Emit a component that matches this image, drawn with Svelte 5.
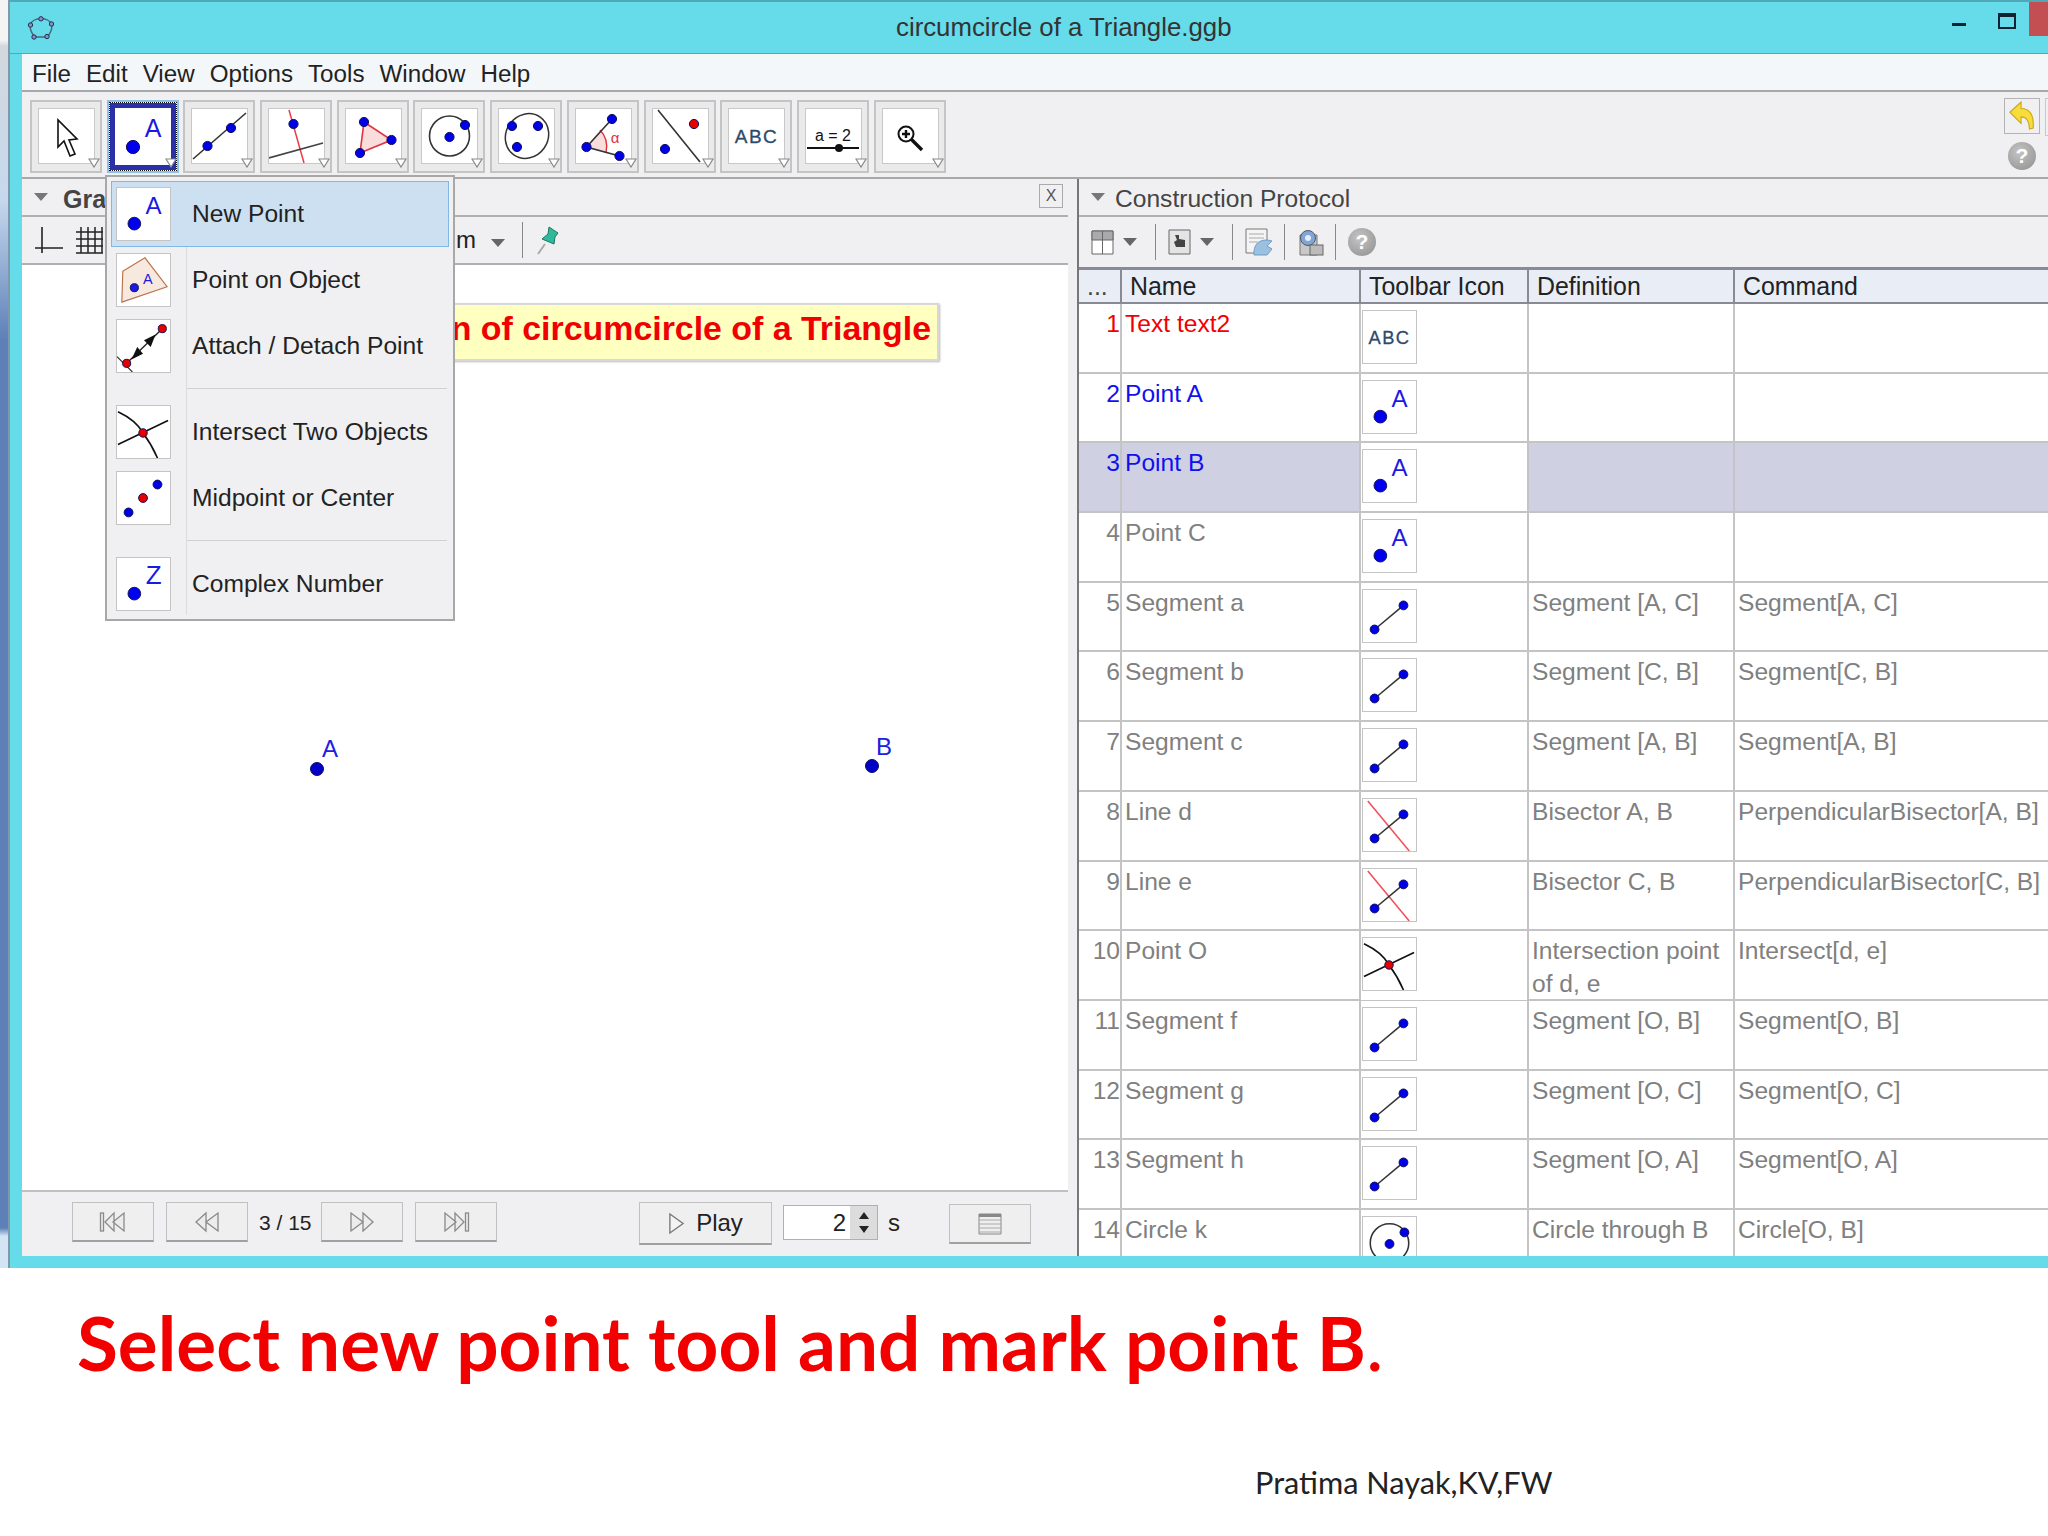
<script>
  const menus = ['File', 'Edit', 'View', 'Options', 'Tools', 'Window', 'Help'];
  const tools = ['move', 'point', 'line', 'perp', 'poly', 'circle', 'conic', 'angle', 'reflect', 'abc', 'slider', 'zoom'];

  const popup = [
    { group: [['point', 'New Point', true], ['onobject', 'Point on Object'], ['attach', 'Attach / Detach Point']] },
    { group: [['intersect', 'Intersect Two Objects'], ['midpoint', 'Midpoint or Center']] },
    { group: [['complex', 'Complex Number']] }
  ];

  const rows = [
    ['Text text2', 'abc', '', '', 'red'],
    ['Point A', 'point', '', '', 'blue'],
    ['Point B', 'point', '', '', 'blue sel'],
    ['Point C', 'point', '', ''],
    ['Segment a', 'seg', 'Segment [A, C]', 'Segment[A, C]'],
    ['Segment b', 'seg', 'Segment [C, B]', 'Segment[C, B]'],
    ['Segment c', 'seg', 'Segment [A, B]', 'Segment[A, B]'],
    ['Line d', 'bisect', 'Bisector A, B', 'PerpendicularBisector[A, B]'],
    ['Line e', 'bisect', 'Bisector C, B', 'PerpendicularBisector[C, B]'],
    ['Point O', 'intersect', 'Intersection point of d, e', 'Intersect[d, e]'],
    ['Segment f', 'seg', 'Segment [O, B]', 'Segment[O, B]'],
    ['Segment g', 'seg', 'Segment [O, C]', 'Segment[O, C]'],
    ['Segment h', 'seg', 'Segment [O, A]', 'Segment[O, A]'],
    ['Circle k', 'circle', 'Circle through B', 'Circle[O, B]']
  ];
</script>

{#snippet dot(x, y, fill = '#0000e6', r = 4.6)}
  <circle cx={x} cy={y} {r} {fill} stroke="#10105a" stroke-width="1" />
{/snippet}

{#snippet icon(name)}
  <svg class="ico" viewBox="0 0 55 54">
    {#if name === 'move'}
      <path d="M19 11 L19 38 L25 32 L31 47 L36 45 L30 31 L38 30 Z" fill="#fff" stroke="#111" stroke-width="1.6" />
    {:else if name === 'point'}
      {@render dot(18, 37, '#0000f0', 6.6)}
      <text x="38" y="27" class="sv" font-size="25" fill="#1a1ae0" text-anchor="middle">A</text>
    {:else if name === 'complex'}
      {@render dot(18, 37, '#0000f0', 6.6)}
      <text x="38" y="27" class="sv" font-size="27" fill="#1a1ae0" text-anchor="middle">Z</text>
    {:else if name === 'line'}
      <line x1="1" y1="50" x2="54" y2="4" stroke="#333" stroke-width="1.6" />
      {@render dot(15.5, 37)}
      {@render dot(39, 19)}
    {:else if name === 'seg'}
      <line x1="12" y1="41" x2="42" y2="16" stroke="#333" stroke-width="1.6" />
      {@render dot(12, 41)}
      {@render dot(42, 16)}
    {:else if name === 'bisect'}
      <line x1="5" y1="2" x2="48" y2="54" stroke="#f0505a" stroke-width="1.6" />
      <line x1="12" y1="41" x2="42" y2="16" stroke="#333" stroke-width="1.6" />
      {@render dot(12, 41)}
      {@render dot(42, 16)}
    {:else if name === 'perp'}
      <line x1="20" y1="1" x2="35" y2="54" stroke="#ee3a46" stroke-width="1.5" />
      <line x1="0" y1="49" x2="54" y2="34" stroke="#444" stroke-width="1.8" />
      {@render dot(24.5, 15)}
    {:else if name === 'poly'}
      <path d="M18 13 L45.5 31 L14 44 Z" fill="#f9dcdc" stroke="#e0323e" stroke-width="1.6" />
      {@render dot(18, 13)}
      {@render dot(45.5, 31)}
      {@render dot(14, 44)}
    {:else if name === 'circle'}
      <circle cx="27.5" cy="27" r="20" fill="none" stroke="#333" stroke-width="1.6" />
      {@render dot(27.5, 28)}
      {@render dot(43, 16)}
    {:else if name === 'conic'}
      <ellipse cx="28" cy="27" rx="21" ry="23" transform="rotate(35 28 27)" fill="none" stroke="#333" stroke-width="1.5" />
      {@render dot(13, 17)}
      {@render dot(39, 17)}
      {@render dot(18, 38)}
    {:else if name === 'angle'}
      <path d="M10.5 38 L24 21 Q33 30 30 44 Z" fill="#f9dcdc" />
      <path d="M24 21 Q33 30 30 44" fill="none" stroke="#e0323e" stroke-width="1.4" />
      <path d="M36 10 L10.5 38 L43.5 47" fill="none" stroke="#333" stroke-width="1.6" />
      <text x="39" y="34" class="sv" font-size="15" fill="#e0323e" text-anchor="middle">α</text>
      {@render dot(36, 10)}
      {@render dot(10.5, 38)}
      {@render dot(43.5, 47)}
    {:else if name === 'reflect'}
      <line x1="5" y1="1" x2="47" y2="53" stroke="#333" stroke-width="1.6" />
      {@render dot(41, 15, '#e60000')}
      {@render dot(12, 40)}
    {:else if name === 'abc'}
      <text x="27.5" y="34" class="sv" font-size="19" fill="#2c4a6b" stroke="#2c4a6b" stroke-width="0.3" letter-spacing="1.5" text-anchor="middle">ABC</text>
    {:else if name === 'slider'}
      <text x="27" y="32" class="sv" font-size="16" fill="#111" text-anchor="middle">a = 2</text>
      <line x1="1" y1="39" x2="53" y2="39" stroke="#111" stroke-width="2" />
      <circle cx="33" cy="39" r="4" fill="#111" />
    {:else if name === 'zoom'}
      <line x1="28" y1="30" x2="39" y2="41" stroke="#111" stroke-width="3.4" />
      <circle cx="23" cy="25" r="7.5" fill="#fff" stroke="#111" stroke-width="2" />
      <path d="M19 25 H27 M23 21 V29" stroke="#111" stroke-width="2.4" />
    {:else if name === 'onobject'}
      <path d="M6 18 L29 4 L52 34 L5 50 Z" fill="#f8e9df" stroke="#b8734c" stroke-width="1.2" />
      {@render dot(18, 35, '#1a1ae0', 4.2)}
      <text x="32" y="31" class="sv" font-size="15" fill="#1a1ae0" text-anchor="middle">A</text>
    {:else if name === 'attach'}
      <path d="M0 38 L16 54" stroke="#333" stroke-width="1.2" />
      <line x1="10" y1="45" x2="47" y2="9" stroke="#222" stroke-width="1.4" />
      <path d="M15 41 L21 28 L27 35 Z M40 15 L28 21 L35 28 Z" fill="#111" />
      {@render dot(47, 9, '#e60000', 4.2)}
      {@render dot(10, 45, '#e60000', 4.2)}
    {:else if name === 'intersect'}
      <path d="M1 6 Q20 15 27 28 Q36 40 42 54" fill="none" stroke="#111" stroke-width="1.7" />
      <line x1="1" y1="40" x2="53" y2="15" stroke="#111" stroke-width="1.7" />
      {@render dot(27, 28, '#e60000', 4.4)}
    {:else if name === 'midpoint'}
      {@render dot(42, 13)}
      {@render dot(27, 27, '#e60000')}
      {@render dot(12, 42)}
    {/if}
  </svg>
{/snippet}

{#snippet media(kind)}
  <svg class="media" viewBox="0 0 28 28">
    <g fill="#ececec" stroke="#8a8a8a" stroke-width="1.3">
      {#if kind === 'first'}
        <rect x="1.5" y="5" width="3" height="18" />
        <path d="M15 5 V23 L6 14 Z M25 5 V23 L14 14 Z" />
      {:else if kind === 'prev'}
        <path d="M13 5 V23 L3 14 Z M25 5 V23 L13 14 Z" />
      {:else if kind === 'next'}
        <path d="M3 5 V23 L15 14 Z M15 5 V23 L25 14 Z" />
      {:else}
        <path d="M3 5 V23 L14 14 Z M13 5 V23 L22 14 Z" />
        <rect x="23.5" y="5" width="3" height="18" />
      {/if}
    </g>
  </svg>
{/snippet}

{#snippet help(size)}
  <span class="help" style="width:{size}px;height:{size}px;font-size:{size - 7}px">?</span>
{/snippet}

<div class="app">
  <div class="window">
    <div class="strip"></div>
    <div class="frame">
      <header class="title">
        <svg class="logo" viewBox="0 0 28 24">
          <path d="M14 2.5 C19 2.5 24 5 25 9 C25 14 23 18 20 21 L8 21 C5 18 3 14 3 9 C4 5 9 2.5 14 2.5 Z" fill="none" stroke="#4a6a70" stroke-width="1.4" />
          <g fill="#7f8fe0" stroke="#223" stroke-width="0.9">
            <circle cx="14" cy="2.8" r="2.2" /><circle cx="24.5" cy="8" r="2.2" /><circle cx="20" cy="20.5" r="2.2" /><circle cx="7" cy="21" r="2.2" /><circle cx="3.5" cy="9" r="2.2" />
          </g>
        </svg>
        <span class="title-text">circumcircle of a Triangle.ggb</span>
        <span class="min"></span>
        <span class="max"></span>
        <span class="close"></span>
      </header>

      <div class="body">
        <nav class="menubar">
          {#each menus as m}<span>{m}</span>{/each}
        </nav>

        <div class="toolbar">
          {#each tools as t, i}
            <div class="tool" class:active={i === 1}>
              <div class="tool-face">{@render icon(t)}</div>
              <svg class="caret" viewBox="0 0 12 10"><path d="M1 1 H11 L6 9 Z" fill="#fff" stroke="#888" stroke-width="1.2" /></svg>
            </div>
          {/each}
          <div class="tool-right">
            <div class="undo">
              <svg viewBox="0 0 30 34" width="28" height="32"><path d="M2 13 L14 2 V9 C23 9 28 15 27 30 L23 31 C23 23 20 18 14 18 V25 Z" fill="#f7dc3c" stroke="#c9a817" stroke-width="1.2" /></svg>
            </div>
            {@render help(28)}
          </div>
          <span class="redo"></span>
        </div>

        <div class="panels">
          <section class="left">
            <div class="panel-head">
              <i class="tri"></i><b>Gra</b>
              <span class="x">X</span>
            </div>
            <div class="stylebar">
              <svg class="axes" viewBox="0 0 28 28"><path d="M7 1 V27 M0 22 H28" stroke="#222" stroke-width="1.6" /></svg>
              <svg class="grid-ico" viewBox="0 0 28 28"><path d="M6 1 V27 M13 1 V27 M20 1 V27 M27 1 V27 M1 6 H28 M1 13 H28 M1 20 H28 M1 27 H28" stroke="#222" stroke-width="1.5" /></svg>
              <span class="m">m</span>
              <i class="tri dark"></i>
              <span class="div"></span>
              <svg class="pin" viewBox="0 0 24 30"><path d="M3 28 L10 18" stroke="#aaa" stroke-width="2" /><path d="M14 1 L23 7 L20 11 L19 18 L7 13 L13 8 Z" fill="#2fb89a" stroke="#187a66" stroke-width="1" /></svg>
            </div>
            <div class="canvas">
              <div class="note">Construction of circumcircle of a Triangle</div>
              <div class="pt" style="left:288px;top:497px"><i></i></div>
              <span class="pt-label" style="left:321px;top:470px">A</span>
              <div class="pt" style="left:843px;top:494px"><i></i></div>
              <span class="pt-label" style="left:875px;top:468px">B</span>
            </div>
            <div class="playbar">
              <button class="pb first">{@render media('first')}</button>
              <button class="pb">{@render media('prev')}</button>
              <span class="count">3 / 15</span>
              <button class="pb">{@render media('next')}</button>
              <button class="pb">{@render media('last')}</button>
              <button class="play">
                <svg viewBox="0 0 18 24" width="17" height="23"><path d="M2 2 V22 L16 12 Z" fill="#f4f4f4" stroke="#777" stroke-width="1.4" /></svg>
                Play
              </button>
              <div class="spin">
                <span class="val">2</span>
                <span class="arrows"><i class="up"></i><i class="down"></i></span>
              </div>
              <span class="sec">s</span>
              <button class="pb list">
                <svg viewBox="0 0 24 22" width="24" height="22"><path d="M1 1 H23 V21 H1 Z" fill="#eee" stroke="#888" /><path d="M1 7 H23 M1 11 H23 M1 15 H23 M1 19 H23" stroke="#aaa" /><path d="M1 1 H23 V4 H1 Z" fill="#888" /></svg>
              </button>
            </div>
          </section>

          <section class="right">
            <div class="panel-head">
              <i class="tri"></i><span class="cp">Construction Protocol</span>
            </div>
            <div class="stylebar rbar">
              <svg width="23" height="25" viewBox="0 0 23 25"><path d="M1 1 H22 V24 H1 Z" fill="#fff" stroke="#666" /><path d="M1 1 H22 V10 H1 Z" fill="#aaa" stroke="#666" /><path d="M11.5 1 V24" stroke="#666" /></svg>
              <i class="tri dark s1"></i>
              <span class="div"></span>
              <svg class="s2" width="23" height="26" viewBox="0 0 23 26"><path d="M1 1 H22 V25 H1 Z" fill="#e4e4e4" stroke="#666" /><path d="M7 6 H11 V10 L17 11 V18 H8 L6 13 L9 11 Z" fill="#444" /></svg>
              <i class="tri dark s1"></i>
              <span class="div"></span>
              <svg class="s2" width="28" height="28" viewBox="0 0 28 28"><path d="M1 1 H22 V25 H1 Z" fill="#f4f4f4" stroke="#777" /><path d="M4 6 H19 M4 10 H19 M4 14 H13" stroke="#aaa" /><path d="M9 27 C8 14 17 10 27 13 L22 18 L27 21 L22 27 Z" fill="#9cc0e0" stroke="#6f9cc4" /></svg>
              <span class="div"></span>
              <svg class="s2" width="27" height="28" viewBox="0 0 27 28"><path d="M3 7 H20 V27 H3 Z" fill="#c8c8c8" stroke="#777" /><circle cx="11" cy="10" r="7.5" fill="#7fa6d6" stroke="#556" /><circle cx="11" cy="10" r="3" fill="#e4eefa" /><rect x="13" y="17" width="13" height="10" fill="#bbb" stroke="#666" /></svg>
              <span class="div"></span>
              <span class="s2">{@render help(28)}</span>
            </div>

            <div class="table">
              <div class="thead">
                <span class="dots">...</span><span>Name</span><span>Toolbar Icon</span><span>Definition</span><span>Command</span>
              </div>
              {#each rows as r, i}
                <div class="row {r[4] ?? ''}">
                  <span class="num">{i + 1}</span>
                  <span class="name">{r[0]}</span>
                  <span class="tb"><span class="box">{@render icon(r[1])}</span></span>
                  <span class="def">{r[2]}</span>
                  <span class="cmd">{r[3]}</span>
                </div>
              {/each}
            </div>
          </section>
        </div>

        <div class="popup">
          {#each popup as p, gi}
            {#if gi > 0}<div class="sep"></div>{/if}
            {#each p.group as it}
              <div class="item" class:hot={it[2]}>
                <span class="box">{@render icon(it[0])}</span>
                <span class="item-text">{it[1]}</span>
              </div>
            {/each}
          {/each}
        </div>
      </div>
    </div>
  </div>

  <div class="slide">
    <h1>Select new point tool and mark point B<span>.</span></h1>
    <p>Pratima Nayak,KV,FW</p>
  </div>
</div>

<style>
  :global(body) {
    margin: 0;
    background: #fff;
  }
  .app {
    width: 2048px;
    height: 1536px;
    overflow: hidden;
    display: flex;
    flex-direction: column;
    font-family: "Liberation Sans", Arial, sans-serif;
    color: #222;
  }
  .window {
    height: 1268px;
    display: flex;
    flex: none;
  }
  .strip {
    width: 8px;
    flex: none;
    border-right: 2px solid #7f9aa6;
    background: linear-gradient(#f4f4f4 0, #f4f4f4 40px, #d3d8de 46px, #c6d8ee 200px, #5d80b8 340px, #5d80b8 1228px, #d3e4f5 1236px);
  }
  .frame {
    flex: 1;
    min-width: 0;
    display: flex;
    flex-direction: column;
    background: #66dbe9;
    border-top: 2px solid #4fa9b6;
    box-sizing: border-box;
  }
  .title {
    height: 52px;
    flex: none;
    display: flex;
    align-items: center;
    position: relative;
    border-bottom: 1px solid #4fa9b6;
    box-sizing: border-box;
  }
  .logo {
    width: 28px;
    height: 24px;
    margin-left: 17px;
  }
  .title-text {
    position: absolute;
    left: 886px;
    top: 11px;
    font-size: 25.8px;
    color: #333;
  }
  .min {
    position: absolute;
    left: 1942px;
    top: 21px;
    width: 14px;
    height: 3px;
    background: #123;
  }
  .max {
    position: absolute;
    left: 1988px;
    top: 11px;
    width: 14px;
    height: 10px;
    border: 2px solid #123;
    border-top-width: 4px;
  }
  .close {
    position: absolute;
    left: 2019px;
    top: 0;
    width: 19px;
    height: 34px;
    background: #c44f53;
  }
  .body {
    flex: 1;
    margin: 0 0 12px 12px;
    display: flex;
    flex-direction: column;
    position: relative;
    background: #f0f0f2;
    min-height: 0;
  }
  .menubar {
    height: 38px;
    flex: none;
    box-sizing: border-box;
    background: #f4f7fa;
    border-bottom: 2px solid #a8a8a8;
    display: flex;
    align-items: center;
    padding: 4px 0 0 10px;
    gap: 15px;
    font-size: 24.2px;
  }
  .toolbar {
    height: 87px;
    flex: none;
    box-sizing: border-box;
    border-bottom: 2px solid #a8a8a8;
    display: flex;
    padding: 8px 0 0 8px;
    gap: 4.7px;
    position: relative;
  }
  .tool {
    width: 72px;
    height: 73px;
    box-sizing: border-box;
    border: 2px solid #c4c4c4;
    background: #eaeaea;
    padding: 7px 7px;
    position: relative;
  }
  .tool-face {
    width: 55px;
    height: 54px;
    background: #fff;
    box-shadow: 0 0 0 1px #c8c8c8;
    overflow: hidden;
  }
  .tool.active {
    border: 2px solid #8fc0e8;
    padding: 1px;
    background: #fff;
  }
  .tool.active .tool-face {
    width: 66px;
    height: 67px;
    box-sizing: border-box;
    border: 5px solid #2b2fa8;
    outline: 1px dotted #111;
    box-shadow: none;
    display: flex;
    align-items: center;
    justify-content: center;
  }
  .ico {
    display: block;
    width: 100%;
    height: 100%;
  }
  .tool.active .ico {
    width: 55px;
    height: 54px;
  }
  .sv {
    font-family: "Liberation Sans", Arial, sans-serif;
  }
  .caret {
    position: absolute;
    right: 0;
    bottom: 3px;
    width: 12px;
    height: 10px;
  }
  .tool-right {
    position: absolute;
    left: 1982px;
    top: 6px;
    width: 36px;
    display: flex;
    flex-direction: column;
    align-items: center;
    gap: 8px;
  }
  .redo {
    position: absolute;
    left: 2023px;
    top: 6px;
    width: 6px;
    height: 36px;
    border: 1px solid #c8c8c8;
    border-right: none;
  }
  .undo {
    width: 36px;
    height: 36px;
    box-sizing: border-box;
    border: 1px solid #b4b4b4;
    display: flex;
    align-items: center;
    justify-content: center;
  }
  .help {
    display: inline-flex;
    align-items: center;
    justify-content: center;
    border-radius: 50%;
    background: radial-gradient(circle at 40% 35%, #c4c4c4, #8e8e8e);
    color: #fff;
    font-weight: 700;
  }
  .panels {
    flex: 1;
    display: flex;
    min-height: 0;
  }
  .left {
    width: 1046px;
    flex: none;
    display: flex;
    flex-direction: column;
    margin-right: 9px;
  }
  .right {
    flex: 1;
    min-width: 0;
    display: flex;
    flex-direction: column;
    border-left: 2px solid #777;
  }
  .panel-head {
    height: 38px;
    flex: none;
    box-sizing: border-box;
    border-bottom: 2px solid #b0b0b0;
    display: flex;
    align-items: center;
    position: relative;
    padding: 4px 0 0 12px;
    font-size: 24.6px;
  }
  .panel-head b {
    margin-left: 15px;
    color: #444;
    font-size: 25px;
  }
  .cp {
    margin-left: 10px;
    color: #444;
  }
  .tri {
    display: inline-block;
    width: 0;
    height: 0;
    border-left: 7px solid transparent;
    border-right: 7px solid transparent;
    border-top: 8px solid #777;
  }
  .panel-head .tri {
    margin-top: -5px;
  }
  .x {
    position: absolute;
    left: 1017px;
    top: 5px;
    width: 22px;
    height: 22px;
    border: 1px solid #aaa;
    font-size: 16px;
    line-height: 22px;
    text-align: center;
    color: #555;
  }
  .stylebar {
    height: 48px;
    flex: none;
    box-sizing: border-box;
    border-bottom: 2px solid #b0b0b0;
    display: flex;
    align-items: center;
    position: relative;
    padding-left: 13px;
  }
  .axes {
    width: 28px;
    height: 28px;
  }
  .grid-ico {
    width: 28px;
    height: 28px;
    margin-left: 12px;
  }
  .m {
    position: absolute;
    left: 434px;
    top: 9px;
    font-size: 24px;
  }
  .tri.dark {
    border-top-color: #666;
    position: absolute;
    left: 469px;
    top: 22px;
  }
  .div {
    width: 1px;
    height: 36px;
    background: #888;
  }
  .stylebar > .div {
    position: absolute;
    left: 500px;
    top: 5px;
  }
  .pin {
    position: absolute;
    left: 513px;
    top: 9px;
    width: 24px;
    height: 30px;
  }
  .canvas {
    flex: 1;
    background: #fff;
    position: relative;
    overflow: hidden;
  }
  .note {
    position: absolute;
    right: 129px;
    top: 38px;
    height: 58px;
    line-height: 47px;
    padding: 0 6px;
    box-sizing: border-box;
    background: #ffffc0;
    border: 2px solid #d8d8d8;
    box-shadow: 1px 1px 2px #bbb;
    font-size: 33.9px;
    font-weight: 700;
    color: #f00000;
    white-space: nowrap;
  }
  .pt {
    position: absolute;
  }
  .pt i {
    display: block;
    width: 12px;
    height: 12px;
    border-radius: 50%;
    background: #0000c8;
    border: 1px solid #10105a;
  }
  .pt-label {
    position: absolute;
    font-size: 24px;
    color: #2020e0;
    margin-left: -21px;
  }
  .playbar {
    height: 66px;
    flex: none;
    box-sizing: border-box;
    border-top: 2px solid #c0c0c0;
    display: flex;
    align-items: flex-start;
    padding-top: 10px;
    font-size: 24px;
    background: #f0f0f2;
  }
  button {
    font-family: inherit;
    font-size: 24px;
    color: #222;
    padding: 0;
    margin: 0;
  }
  .pb {
    width: 82px;
    height: 40px;
    box-sizing: border-box;
    border: 1px solid #c0c0c0;
    border-bottom: 2px solid #a0a0a0;
    background: #efefef;
    margin-right: 12px;
    display: flex;
    align-items: center;
    justify-content: center;
  }
  .pb.first {
    margin-left: 50px;
  }
  .media {
    width: 28px;
    height: 28px;
  }
  .count {
    width: 62px;
    margin-left: -1px;
    line-height: 42px;
    font-size: 21px;
  }
  .play {
    width: 133px;
    height: 43px;
    box-sizing: border-box;
    border: 1px solid #c0c0c0;
    border-bottom: 2px solid #a0a0a0;
    background: #efefef;
    margin-left: 130px;
    display: flex;
    align-items: center;
    justify-content: center;
    gap: 11px;
  }
  .spin {
    width: 95px;
    height: 35px;
    margin: 3px 0 0 11px;
    box-sizing: border-box;
    border: 1px solid #b0b0b0;
    background: #fff;
    display: flex;
    justify-content: flex-end;
    align-items: center;
  }
  .val {
    margin-right: 4px;
  }
  .arrows {
    width: 27px;
    height: 33px;
    background: #dcdcdc;
    display: flex;
    flex-direction: column;
    align-items: center;
    justify-content: space-around;
    padding: 3px 0;
    box-sizing: border-box;
  }
  .up {
    border-left: 5px solid transparent;
    border-right: 5px solid transparent;
    border-bottom: 7px solid #222;
  }
  .down {
    border-left: 5px solid transparent;
    border-right: 5px solid transparent;
    border-top: 7px solid #222;
  }
  .sec {
    margin: 7px 0 0 10px;
  }
  .pb.list {
    margin: 2px 0 0 49px;
  }
  .rbar {
    height: 50px;
    border-bottom: none;
    padding-left: 12px;
  }
  .rbar .div {
    position: static;
    margin-left: 11px;
  }
  .rbar .tri.dark {
    position: static;
  }
  .rbar .s1 {
    margin-left: 9px;
  }
  .rbar .s1 + .div {
    margin-left: 18px;
  }
  .rbar .s2 {
    margin-left: 12px;
  }
  .table {
    flex: 1;
    min-height: 0;
    overflow: hidden;
    border-top: 3px solid #8a8a94;
    background: #fff;
    font-size: 24.6px;
  }
  .thead,
  .row {
    display: grid;
    grid-template-columns: 43px 239px 168px 206px 1fr;
  }
  .thead {
    height: 34px;
    background: #e8edf6;
    border-bottom: 2px solid #8a8a94;
    box-sizing: border-box;
    color: #222;
    line-height: 33px;
  }
  .thead span {
    padding-left: 8px;
    border-right: 2px solid #8a8a94;
    box-sizing: border-box;
    font-size: 24.9px;
  }
  .thead span:last-child {
    border-right: none;
  }
  .thead .dots {
    color: #444;
  }
  .row {
    height: 69.7px;
    box-sizing: border-box;
    border-bottom: 2px solid #c4c4c4;
    line-height: 33px;
    color: #808080;
  }
  .row > span {
    box-sizing: border-box;
    border-right: 2px solid #c4c4c4;
    padding: 3px 0 0 3px;
  }
  .row > span:last-child {
    border-right: none;
    white-space: nowrap;
  }
  .row .num {
    text-align: right;
    padding-right: 0;
  }
  .row .name {
    padding-left: 3px;
  }
  .row .tb {
    padding: 6px 0 0 1px;
    background: #fff;
  }
  .row .def {
    padding-left: 3px;
  }
  .row.red {
    color: #f00000;
  }
  .row.blue {
    color: #1010f0;
  }
  .row.sel {
    background: #cfd0e2;
  }
  .box {
    display: block;
    width: 55px;
    height: 54px;
    box-sizing: border-box;
    background: #fff;
    border: 1px solid #c4c4c4;
    overflow: hidden;
  }
  .popup {
    position: absolute;
    left: 83px;
    top: 121px;
    width: 350px;
    height: 446px;
    box-sizing: border-box;
    background: #f0f0f2;
    border: 2px solid #a8a8a8;
    padding: 4px;
  }
  .popup::before {
    content: "";
    position: absolute;
    left: 79px;
    top: 4px;
    bottom: 4px;
    width: 1px;
    background: #dcdcdc;
  }
  .item {
    height: 66px;
    display: flex;
    align-items: center;
    font-size: 24.6px;
    position: relative;
    box-sizing: border-box;
    padding-left: 4px;
    border: 1px solid transparent;
  }
  .item.hot {
    background: #cde0f2;
    border-color: #82b6e4;
  }
  .item-text {
    margin-left: 21px;
    color: #222;
  }
  .sep {
    height: 1px;
    margin: 9px 2px 10px 76px;
    background: #d0d0d0;
    position: relative;
  }
  .slide {
    flex: 1;
    background: #fff;
    font-family: Lato, "Open Sans", sans-serif;
    padding-left: 77px;
  }
  h1 {
    margin: 29px 0 0;
    font-size: 74.7px;
    line-height: 90px;
    font-weight: 700;
    color: #f20000;
  }
  h1 span {
    font-weight: 400;
  }
  p {
    margin: 77px 0 0 1178px;
    font-size: 30.7px;
    color: #222;
  }
</style>
